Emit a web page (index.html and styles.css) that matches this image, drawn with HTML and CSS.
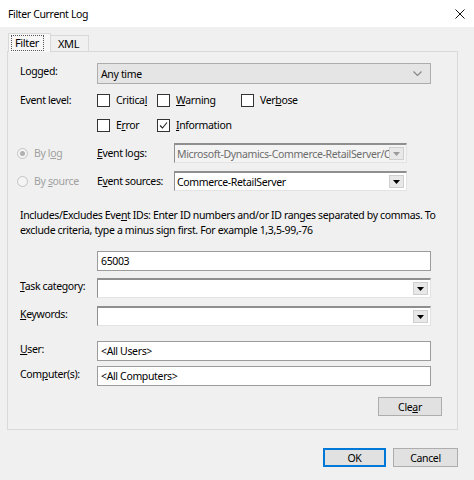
FILE: index.html
```html
<!DOCTYPE html>
<html>
<head>
<meta charset="utf-8">
<link rel="stylesheet" href="styles.css">
</head>
<body>
<div class="window">
  <div class="titlebar">
    <span class="title">Filter Current Log</span>
    <svg class="close" width="10" height="10" viewBox="0 0 10 10"><path d="M0.5 0.5 L9.5 9.5 M9.5 0.5 L0.5 9.5" stroke="#111" stroke-width="1"/></svg>
  </div>
  <div class="dialog">
    <div class="tabs">
      <div class="tab active"><span class="focus">Filter</span></div>
      <div class="tab">XML</div>
    </div>
    <div class="panel">
      <div class="row r-logged">
        <div class="label">Logged:</div>
        <div class="select">
          <span>Any time</span>
          <svg class="chev" width="9" height="5" viewBox="0 0 9 5"><path d="M0.5 0.5 L4.5 4.5 L8.5 0.5" fill="none" stroke="#888" stroke-width="1.2"/></svg>
        </div>
      </div>
      <div class="row r-level">
        <div class="label">Event level:</div>
        <div class="checks">
          <label class="chk"><span class="box"></span><span>Critica<u>l</u></span></label>
          <label class="chk"><span class="box"></span><span><u>W</u>arning</span></label>
          <label class="chk"><span class="box"></span><span>Ver<u>b</u>ose</span></label>
        </div>
      </div>
      <div class="row r-level2">
        <div class="label"></div>
        <div class="checks">
          <label class="chk"><span class="box"></span><span>E<u>r</u>ror</span></label>
          <label class="chk"><span class="box checked"><svg width="11" height="11" viewBox="0 0 11 11"><path d="M2 5.5 L4.5 8 L9 2.5" fill="none" stroke="#222" stroke-width="1.1"/></svg></span><span><u>I</u>nformation</span></label>
        </div>
      </div>
      <div class="row r-bylog">
        <div class="radio"><span class="dot on"></span><span class="rtext">By l<u>o</u>g</span></div>
        <div class="sublabel"><u>E</u>vent logs:</div>
        <div class="combo disabled short">
          <span class="ctext">Microsoft-Dynamics-Commerce-RetailServer/Operational</span>
          <span class="dbtn"><svg width="7" height="4" viewBox="0 0 7 4"><path d="M0 0 L7 0 L3.5 4 Z" fill="#9a9a9a"/></svg></span>
        </div>
      </div>
      <div class="row r-bysource">
        <div class="radio"><span class="dot"></span><span class="rtext">By <u>s</u>ource</span></div>
        <div class="sublabel">E<u>v</u>ent sources:</div>
        <div class="combo short">
          <span class="ctext">Commerce-RetailServer</span>
          <span class="dbtn"><svg width="7" height="4" viewBox="0 0 7 4"><path d="M0 0 L7 0 L3.5 4 Z" fill="#000"/></svg></span>
        </div>
      </div>
      <p class="desc">Includes/Excludes Eve<u>n</u>t IDs: Enter ID numbers and/or ID ranges separated by commas. To<br>exclude criteria, type a minus sign first. For example 1,3,5-99,-76</p>
      <div class="row r-ids">
        <div class="label"></div>
        <div class="input">65003</div>
      </div>
      <div class="row r-task">
        <div class="label"><u>T</u>ask category:</div>
        <div class="combo">
          <span class="ctext"></span>
          <span class="dbtn"><svg width="7" height="4" viewBox="0 0 7 4"><path d="M0 0 L7 0 L3.5 4 Z" fill="#000"/></svg></span>
        </div>
      </div>
      <div class="row r-key">
        <div class="label"><u>K</u>eywords:</div>
        <div class="combo">
          <span class="ctext"></span>
          <span class="dbtn"><svg width="7" height="4" viewBox="0 0 7 4"><path d="M0 0 L7 0 L3.5 4 Z" fill="#000"/></svg></span>
        </div>
      </div>
      <div class="row r-user">
        <div class="label"><u>U</u>ser:</div>
        <div class="input">&lt;All Users&gt;</div>
      </div>
      <div class="row r-comp">
        <div class="label">Com<u>p</u>uter(s):</div>
        <div class="input">&lt;All Computers&gt;</div>
      </div>
      <div class="clear-row">
        <div class="btn">Cle<u>a</u>r</div>
      </div>
    </div>
    <div class="footer">
      <div class="btn ok">OK</div>
      <div class="btn">Cancel</div>
    </div>
  </div>
</div>
</body>
</html>
```
FILE: styles.css
```css
* { box-sizing: border-box; }
html, body { margin: 0; padding: 0; }
body {
  width: 474px;
  height: 480px;
  overflow: hidden;
  background: #f0f0f0;
  font-family: "Noto Sans", "Open Sans", sans-serif;
  font-size: 10.5px;
  letter-spacing: -0.35px;
  color: #000;
}
u { text-decoration: underline; text-underline-offset: 1px; }
.window { width: 474px; height: 480px; }
.titlebar {
  height: 27px;
  background: #fff;
  display: flex;
  align-items: center;
  justify-content: space-between;
  padding: 0 9px 0 8px;
}
.title { font-size: 10.5px; }
.close { display: block; }
.dialog { padding: 6px 16px 0 7px; }
.tabs {
  display: flex;
  align-items: flex-end;
  height: 18px;
  padding-left: 1px;
}
.tab {
  height: 16px;
  border: 1px solid #d9d9d9;
  border-bottom: none;
  background: #f0f0f0;
  padding: 0 7px 0 7px;
  display: flex;
  align-items: center;
  font-size: 11px;
}
.tab.active {
  height: 19px;
  margin-bottom: -1px;
  background: #f7f7f7;
  padding: 0 3px 0 2px;
  position: relative;
  z-index: 1;
  width: 43px;
}
.tab + .tab { border-left: none; width: 38px; }
.focus {
  border: 1px dotted #555;
  padding: 0 4px 0 3px;
  line-height: 14px;
}
.panel {
  height: 379px;
  border: 1px solid #d9d9d9;
  background: #f0f0f0;
  display: flex;
  flex-direction: column;
  padding-left: 12px;
}
.row { display: flex; align-items: flex-start; }
.label { width: 77px; flex: none; padding-top: 1px; }
.select {
  width: 334px;
  height: 21px;
  background: #e5e5e5;
  border: 1px solid #adadad;
  display: flex;
  align-items: center;
  justify-content: space-between;
  padding: 0 8px 0 3px;
}
.r-logged { margin-top: 11px; }
.r-level { margin-top: 8px; height: 16px; }
.r-level2 { margin-top: 9px; height: 16px; }
.checks {
  display: grid;
  grid-template-columns: 60px 84px auto;
  align-items: center;
  height: 16px;
}
.chk { display: flex; align-items: center; gap: 6px; }
.box {
  width: 13px;
  height: 13px;
  border: 1px solid #333;
  background: #fff;
  display: inline-flex;
  align-items: center;
  justify-content: center;
  flex: none;
}
.box svg { display: block; }
.r-bylog { margin-top: 10px; height: 20px; align-items: center; }
.r-bysource { margin-top: 8px; height: 20px; align-items: center; }
.radio {
  width: 77px;
  flex: none;
  display: flex;
  align-items: center;
  gap: 6px;
  margin-left: -3px;
  margin-right: 3px;
  color: #a0a0a0;
}
.dot {
  width: 11px;
  height: 11px;
  border-radius: 50%;
  border: 1px solid #c4c4c4;
  background: #f4f4f4;
  position: relative;
  flex: none;
}
.dot.on::after {
  content: "";
  position: absolute;
  left: 2px;
  top: 2px;
  width: 5px;
  height: 5px;
  border-radius: 50%;
  background: #b0b0b0;
}
.sublabel { width: 77px; flex: none; }
.combo {
  width: 334px;
  height: 20px;
  background: #fff;
  border-top: 2px solid #8f8f8f;
  border-left: 1px solid #8f8f8f;
  border-right: 1px solid #e3e3e3;
  border-bottom: 1px solid #e3e3e3;
  display: flex;
  align-items: center;
  padding: 0 1px 0 1px;
  overflow: hidden;
}
.combo.short { width: 233px; }
.ctext {
  flex: 1;
  white-space: nowrap;
  overflow: hidden;
  padding-left: 1px;
}
.combo.disabled { background: #f3f3f3; color: #6d6d6d; }
.dbtn {
  width: 15px;
  height: 13px;
  flex: none;
  background: #e8e8e8;
  border: 1px solid #cfcfcf;
  display: flex;
  align-items: center;
  justify-content: center;
  margin-right: 1px;
}
.dbtn svg { display: block; }
.desc {
  margin: 17px 0 0 0;
  line-height: 15px;
  white-space: nowrap;
}
.r-ids { margin-top: 13px; }
.input {
  width: 334px;
  height: 20px;
  background: #fff;
  border: 1px solid #9c9c9c;
  display: flex;
  align-items: center;
  padding-left: 3px;
}
.r-task { margin-top: 7px; }
.r-key { margin-top: 8px; }
.r-user { margin-top: 15px; }
.r-comp { margin-top: 5px; }
.clear-row {
  margin-top: 11px;
  display: flex;
  justify-content: flex-end;
  padding-right: 15px;
}
.btn {
  width: 64px;
  height: 19px;
  background: #e1e1e1;
  border: 1px solid #adadad;
  display: flex;
  align-items: center;
  justify-content: center;
}
.footer {
  margin-top: 18px;
  display: flex;
  justify-content: flex-end;
  gap: 7px;
  padding-right: 0;
}
.footer .btn { width: 65px; }
.btn.ok { border: 2px solid #0078d7; width: 63px; }
```
